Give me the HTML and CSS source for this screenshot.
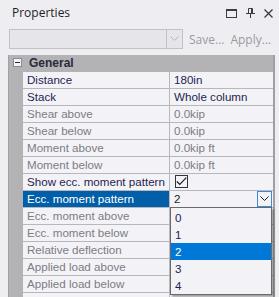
FILE: index.html
```html
<!DOCTYPE html>
<html>
<head>
<meta charset="utf-8">
<link rel="stylesheet" href="styles.css">
</head>
<body>
<div class="panel">
  <div class="titlebar">
    <span class="title">Properties</span>
    <div class="tb-icons">
      <svg width="11" height="9" viewBox="0 0 11 9"><rect x="0.5" y="0.5" width="10" height="8" fill="none" stroke="#3c3c3c"/><line x1="0" y1="1.5" x2="11" y2="1.5" stroke="#3c3c3c"/></svg>
      <svg width="9" height="10" viewBox="0 0 9 10"><path d="M2.5 0.5h4v5h-4z M0 5.5h9 M4.5 6v4" fill="none" stroke="#3c3c3c"/><line x1="5.5" y1="1" x2="5.5" y2="5" stroke="#3c3c3c"/></svg>
      <svg width="9" height="9" viewBox="0 0 9 9"><path d="M0.5 0.5l8 8M8.5 0.5l-8 8" stroke="#3c3c3c" stroke-width="1.3"/></svg>
    </div>
  </div>
  <div class="toolbar">
    <div class="combo">
      <div class="combo-field"></div>
      <div class="combo-btn"><svg width="9" height="6" viewBox="0 0 9 6"><path d="M0.5 0.5l4 4 4-4" fill="none" stroke="#b8b8b8"/></svg></div>
    </div>
    <span class="tool">Save...</span>
    <span class="tool">Apply...</span>
  </div>
  <div class="grid">
    <div class="row cat"><div class="margin"><span class="exp"></span></div><div class="catname">General</div></div>
    <div class="row"><div class="margin"></div><div class="name">Distance</div><div class="val">180in</div></div>
    <div class="row"><div class="margin"></div><div class="name">Stack</div><div class="val">Whole column</div></div>
    <div class="row ro"><div class="margin"></div><div class="name">Shear above</div><div class="val">0.0kip</div></div>
    <div class="row ro"><div class="margin"></div><div class="name">Shear below</div><div class="val">0.0kip</div></div>
    <div class="row ro"><div class="margin"></div><div class="name">Moment above</div><div class="val">0.0kip ft</div></div>
    <div class="row ro"><div class="margin"></div><div class="name">Moment below</div><div class="val">0.0kip ft</div></div>
    <div class="row"><div class="margin"></div><div class="name">Show ecc. moment pattern</div><div class="val"><span class="check"><svg width="11" height="9" viewBox="0 0 11 9"><path d="M0.8 4.5l3 3 6.5-6.8" fill="none" stroke="#1e1e1e" stroke-width="1.2"/></svg></span></div></div>
    <div class="row sel"><div class="margin"></div><div class="name">Ecc. moment pattern</div><div class="val editing">2<span class="ddbtn"><svg width="9" height="6" viewBox="0 0 9 6"><path d="M0.5 0.5l4 4 4-4" fill="none" stroke="#1e1e1e"/></svg></span>
      <div class="dropdown">
        <div class="opt">0</div>
        <div class="opt">1</div>
        <div class="opt on">2</div>
        <div class="opt">3</div>
        <div class="opt">4</div>
      </div>
    </div></div>
    <div class="row ro"><div class="margin"></div><div class="name">Ecc. moment above</div><div class="val"></div></div>
    <div class="row ro"><div class="margin"></div><div class="name">Ecc. moment below</div><div class="val"></div></div>
    <div class="row ro"><div class="margin"></div><div class="name">Relative deflection</div><div class="val"></div></div>
    <div class="row ro"><div class="margin"></div><div class="name">Applied load above</div><div class="val"></div></div>
    <div class="row ro"><div class="margin"></div><div class="name">Applied load below</div><div class="val"></div></div>
    <div class="row ro"><div class="margin"></div><div class="name">Applied force</div><div class="val"></div></div>
  </div>
</div>
</body>
</html>
```
FILE: styles.css
```css
html, body {
  margin: 0;
  padding: 0;
  background: #eeeef2;
  overflow: hidden;
}
.panel {
  width: 279px;
  height: 297px;
  font-family: "Liberation Sans", Arial, sans-serif;
  font-size: 12px;
  color: #1e1e1e;
  overflow: hidden;
}
.titlebar {
  height: 26px;
  display: flex;
  align-items: center;
  justify-content: space-between;
  padding: 0 6px 0 12px;
}
.title {
  font-family: "Open Sans", sans-serif;
  font-size: 12px;
  color: #1e1e1e;
  margin-top: -1px;
}
.tb-icons {
  display: flex;
  align-items: center;
  gap: 9px;
}
.toolbar {
  display: flex;
  align-items: center;
  height: 22px;
  margin-top: 2px;
  padding-left: 9px;
}
.combo {
  width: 174px;
  height: 20px;
  box-sizing: border-box;
  border: 1px solid #c2c2c6;
  background: #e6e6ea;
  display: flex;
}
.combo-field { flex: 1; }
.combo-btn {
  width: 15px;
  border-left: 1px solid #c2c2c6;
  display: flex;
  align-items: center;
  justify-content: center;
}
.tool {
  font-family: "Open Sans", sans-serif;
  font-size: 12px;
  color: #9a9aa0;
  margin-left: 6px;
}
.grid {
  margin: 5px 4px 0 8px;
  border-left: 1px solid #a0a0a0;
  border-right: 2px solid #a0a0a0;
  background: #b3b3b6;
}
.row {
  display: grid;
  grid-template-columns: 14px 147px 1fr;
  height: 17px;
  box-sizing: border-box;
  font-family: "Liberation Sans", Arial, sans-serif;
  font-size: 11.6px;
  line-height: 16px;
}
.margin {
  background: #b3b3b6;
  position: relative;
}
.name, .val {
  background: #f3f3f7;
  border-bottom: 1px solid #b8b8bc;
  padding-left: 4px;
  white-space: nowrap;
  overflow: hidden;
  color: #1e1e50;
}
.name { border-right: 1px solid #b8b8bc; }
.cat .catname {
  grid-column: 2 / 4;
  font-weight: bold;
  color: #2a2a3a;
  padding-left: 6px;
  font-size: 12px;
  line-height: 16px;
}
.exp {
  position: absolute;
  left: 4px;
  top: 3px;
  width: 9px;
  height: 9px;
  box-sizing: border-box;
  border: 1px solid #8a8a90;
  background: #f4f4f8;
}
.exp::after {
  content: "";
  position: absolute;
  left: 1px;
  top: 3px;
  width: 5px;
  height: 1px;
  background: #2a2a3a;
}
.ro .name, .ro .val { color: #7c7c84; }
.check {
  display: inline-flex;
  align-items: center;
  justify-content: center;
  width: 13px;
  height: 13px;
  box-sizing: border-box;
  border: 1px solid #333;
  margin-top: 1px;
  margin-left: 1px;
  vertical-align: top;
}
.val { position: relative; overflow: visible; }
.sel .name {
  background: #005fa8;
  color: #ffffff;
}
.editing { color: #1e1e1e; }
.ddbtn {
  position: absolute;
  right: 1px;
  top: 0;
  width: 15px;
  height: 16px;
  box-sizing: border-box;
  border: 1px solid #3b8ad6;
  display: flex;
  align-items: center;
  justify-content: center;
  background: #f3f3f7;
}
.dropdown {
  position: absolute;
  left: 0;
  top: 16px;
  width: 102px;
  box-sizing: border-box;
  border: 1px solid #6a6a6a;
  background: #f3f3f7;
  box-shadow: 2px 2px 2px rgba(0,0,0,0.35);
  z-index: 5;
  padding-top: 1px;
}
.opt {
  height: 17px;
  line-height: 17px;
  padding-left: 4px;
  color: #1e1e50;
}
.opt.on {
  background: #0078d7;
  color: #ffffff;
}
```
